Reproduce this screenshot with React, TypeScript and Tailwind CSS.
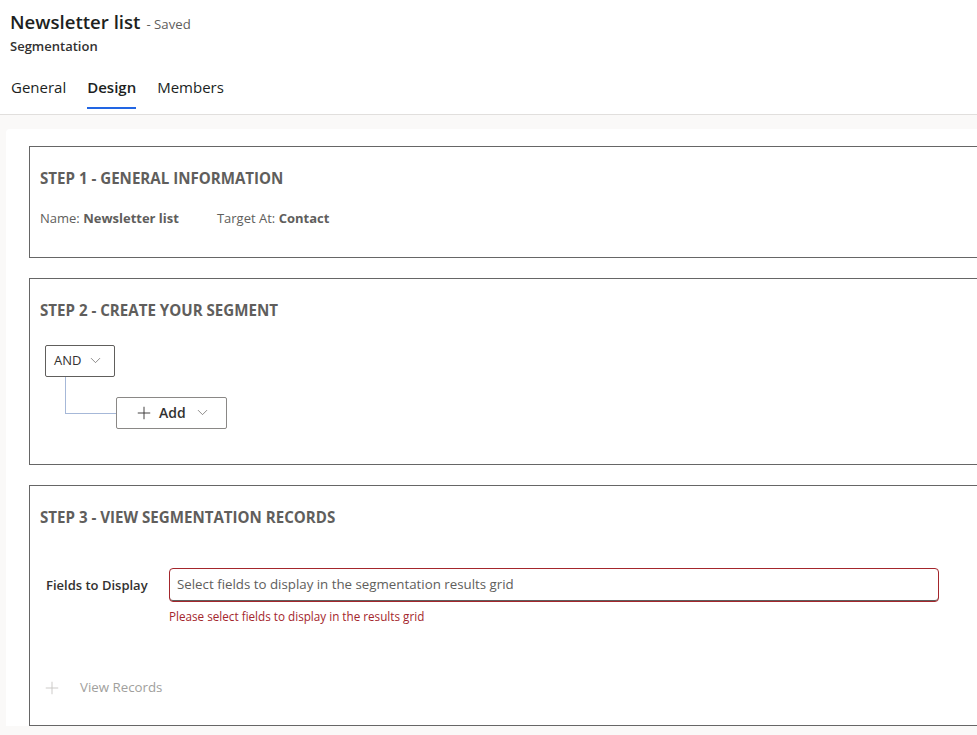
import { ChevronDown, Plus } from 'lucide-react';

const font = { fontFamily: '"Open Sans", "Noto Sans", Arial, sans-serif' };

function StepBox({ title, className, children }: { title: string; className?: string; children?: React.ReactNode }) {
  return (
    <section className={`border border-[#666666] bg-white ${className ?? ''}`}>
      <h2 className="pl-[10px] pt-[21px] text-[15.1px] font-bold leading-[20px] text-[#605e5c]">{title}</h2>
      {children}
    </section>
  );
}

export default function App() {
  return (
    <div className="h-[735px] w-[977px] overflow-hidden bg-[#faf9f8] text-[#323130]" style={font}>
      {/* header */}
      <header className="bg-white border-b border-[#e1dfdd]">
        <div className="pl-[10px] pt-[10px]">
          <div className="flex items-baseline gap-[6px]">
            <h1 className="text-[18.6px] font-semibold leading-[24px] text-[#201f1e]">Newsletter list</h1>
            <span className="text-[13.2px] text-[#605e5c]">- Saved</span>
          </div>
          <div className="mt-[1px] text-[13px] font-semibold leading-[20px] text-[#323130]">Segmentation</div>
        </div>
        <nav className="flex gap-[21px] pl-[11px] pt-[21px] text-[15px] leading-[20px]">
          <div className="pb-[17px] text-[#201f1e]">General</div>
          <div className="relative pb-[17px] font-semibold text-[#201f1e]">
            Design
            <div className="absolute bottom-[5px] left-0 right-0 h-[2px] bg-[#2266e3]" />
          </div>
          <div className="pb-[17px] text-[#201f1e]">Members</div>
        </nav>
      </header>

      {/* card */}
      <main className="ml-[6px] mt-[14px] w-[1000px] rounded-tl-[4px] bg-white pl-[23px] pt-[17px]">
        <StepBox title="STEP 1 - GENERAL INFORMATION" className="h-[112px]">
          <div className="flex gap-[38px] pl-[10px] pt-[21px] text-[13px] text-[#605e5c]">
            <span>
              Name: <b className="font-bold">Newsletter list</b>
            </span>
            <span>
              Target At: <b className="font-bold">Contact</b>
            </span>
          </div>
        </StepBox>

        <StepBox title="STEP 2 - CREATE YOUR SEGMENT" className="mt-[20px] h-[187px]">
          <div className="pl-[15px] pt-[25px]">
            <div className="flex h-[32px] w-[70px] items-center gap-[6px] rounded-[2px] border border-[#605e5c] pl-[8px] text-[13px] text-[#323130]">
              AND
              <ChevronDown size={17} strokeWidth={1} className="text-[#605e5c]" />
            </div>
            <div className="flex">
              <div className="ml-[20px] h-[37px] w-[51px] border-b border-l border-[#a6b8d8]" />
              <div className="mt-[20px] flex h-[32px] w-[111px] items-center gap-[5px] rounded-[2px] border border-[#8a8886] pl-[17px] text-[14px] font-semibold text-[#323130]">
                <Plus size={20} strokeWidth={1.1} />
                Add
                <ChevronDown size={17} strokeWidth={1} className="ml-[3px] text-[#605e5c]" />
              </div>
            </div>
          </div>
        </StepBox>

        <StepBox title="STEP 3 - VIEW SEGMENTATION RECORDS" className="mt-[20px] h-[241px]">
          <div className="flex pl-[16px] pt-[41px]">
            <label className="w-[123px] pt-[8px] text-[13px] font-semibold text-[#323130]">Fields to Display</label>
            <div>
              <div className="flex h-[34px] w-[770px] items-center rounded-[4px] border border-[#a4262c] shadow-[inset_0_-1px_0_#605e5c] pl-[7px] text-[13.3px] text-[#605e5c]">
                Select fields to display in the segmentation results grid
              </div>
              <div className="pt-[6px] text-[11.7px] text-[#a4262c]">Please select fields to display in the results grid</div>
            </div>
          </div>
          <div className="flex items-center gap-[18px] pl-[12px] pt-[53px] text-[13.3px] text-[#a19f9d]">
            <Plus size={20} strokeWidth={1.1} className="text-[#c8c6c4]" />
            View Records
          </div>
        </StepBox>
      </main>
    </div>
  );
}
